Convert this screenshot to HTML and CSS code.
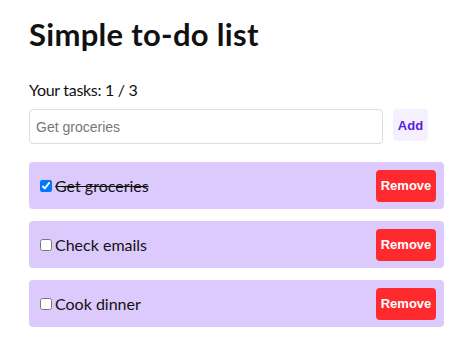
FILE: index.html
```html
<!DOCTYPE html>
<html lang="en">
<head>
    <meta charset="UTF-8">
    <meta name="viewport" content="width=device-width, initial-scale=1.0">
    <link rel="stylesheet" href="styles.css">
    <title>Simple to-do list</title>
</head>
<body>
    <div class="app">
        <h1 class="title">Simple to-do list</h1>
        <p class="count">Your tasks: 1 / 3</p>

        <form class="add-form">
            <input class="add-input" type="text" placeholder="Get groceries">
            <button class="add-button" type="button">Add</button>
        </form>

        <ul class="tasks">
            <li class="task">
                <label class="task-label">
                    <input class="task-check" type="checkbox" checked>
                    <span class="task-text done">Get groceries</span>
                </label>
                <button class="remove-button" type="button">Remove</button>
            </li>
            <li class="task">
                <label class="task-label">
                    <input class="task-check" type="checkbox">
                    <span class="task-text">Check emails</span>
                </label>
                <button class="remove-button" type="button">Remove</button>
            </li>
            <li class="task">
                <label class="task-label">
                    <input class="task-check" type="checkbox">
                    <span class="task-text">Cook dinner</span>
                </label>
                <button class="remove-button" type="button">Remove</button>
            </li>
        </ul>
    </div>
</body>
</html>
```

FILE: styles.css
```css
* {
    margin: 0;
    padding: 0;
    box-sizing: border-box;
}

body {
    font-family: "Lato", "Noto Sans", sans-serif;
    color: #111;
    background-color: white;
}

.app {
    padding: 16px 30px 0 29px;
}

.title {
    font-size: 31px;
    font-weight: 700;
    line-height: 36px;
    letter-spacing: 0.3px;
}

.count {
    margin-top: 28px;
    font-size: 16px;
    line-height: 20px;
    letter-spacing: -0.3px;
}

.add-form {
    display: flex;
    align-items: flex-start;
    gap: 10px;
    margin-top: 9px;
}

.add-input {
    width: 354px;
    height: 35px;
    padding: 0 6px;
    border: 1px solid #ddd;
    border-radius: 4px;
    font-family: "Liberation Sans", Arial, sans-serif;
    font-size: 14px;
    color: #333;
}
.add-input::placeholder {
    color: #777;
}

.add-button {
    width: 35px;
    height: 32px;
    border: none;
    border-radius: 4px;
    background-color: #f4f0fe;
    color: #5a1de0;
    font-family: "Liberation Sans", Arial, sans-serif;
    font-size: 13px;
    font-weight: bold;
}

.tasks {
    list-style: none;
    display: flex;
    flex-direction: column;
    gap: 12px;
    margin-top: 18px;
}

.task {
    display: flex;
    justify-content: space-between;
    align-items: center;
    height: 47px;
    padding: 0 8px 0 11px;
    border-radius: 4px;
    background-color: #dccafd;
}

.task-label {
    display: flex;
    align-items: center;
    gap: 3px;
    font-size: 16px;
}

.task-check {
    width: 12px;
    height: 12px;
    margin: 0;
}

.task-text.done {
    text-decoration: line-through;
}

.remove-button {
    width: 60px;
    height: 32px;
    border: none;
    border-radius: 4px;
    background-color: #ff2a2e;
    color: white;
    font-family: "Liberation Sans", Arial, sans-serif;
    font-size: 13px;
    font-weight: bold;
}
```
